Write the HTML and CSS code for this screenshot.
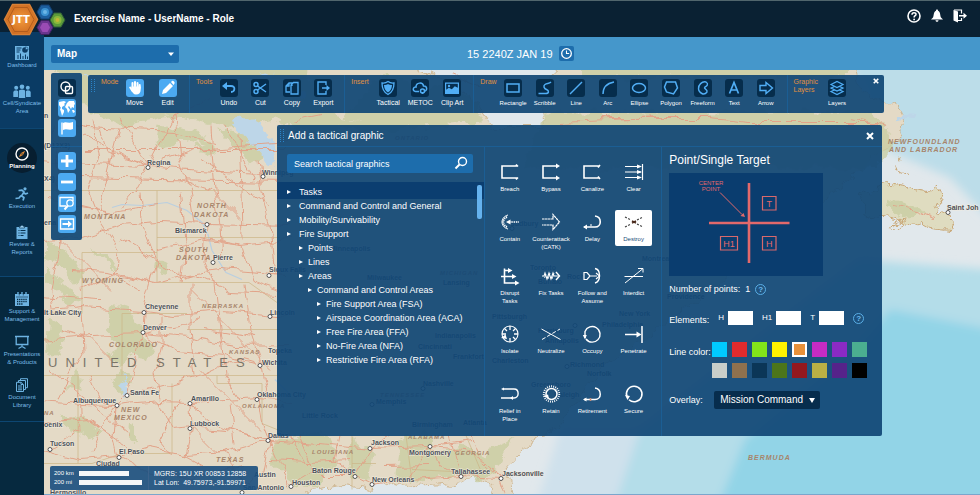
FILE: index.html
```html
<!DOCTYPE html>
<html lang="en">
<head>
<meta charset="utf-8">
<title>JTT - Planning</title>
<link rel="stylesheet" href="styles.css">
</head>
<body>
<header class="topbar">
  <svg class="logo" viewBox="0 0 66 38" role="img" aria-label="JTT">
    <defs>
      <radialGradient id="go"><stop offset="0" stop-color="#f39a3c"/><stop offset="1" stop-color="#cf6d22"/></radialGradient>
    </defs>
    <path d="M37 12l4-7h8l4 7-4 7h-8z" fill="#1d5f9e" stroke="#123f70"/><circle cx="45" cy="12" r="4" fill="#3c93d2"/><circle cx="45" cy="12" r="2" fill="#6bb5e6"/>
    <path d="M37 27.500l4-7h8l4 7-4 7h-8z" fill="#6a358e" stroke="#3d2263"/><path d="M40 27.500l2.500-4.500h5l2.500 4.500-2.500 4.500h-5z" fill="#9a4bb4"/>
    <path d="M50 20l4-7h7l4 7-4 7h-7z" fill="#5c9a3a" stroke="#2f5e38"/><circle cx="57.500" cy="20" r="4" fill="#8cb83c"/><circle cx="57.500" cy="20" r="2" fill="#c3b537"/>
    <path d="M4.500 19.500L12.500 4.500h17l8 15-8 15h-17z" fill="url(#go)" stroke="#d98136" stroke-width="1.500"/>
    <path d="M8 19.500l6.500-12h13l6.500 12-6.500 12h-13z" fill="none" stroke="#a8551b" stroke-width=".8"/>
    <text x="21" y="23" class="logo-text">JTT</text>
  </svg>
  <h1>Exercise Name - UserName - Role</h1>
  <div class="top-actions">
    <button aria-label="Help"><svg viewBox="0 0 14 14"><circle cx="7" cy="7" r="6" fill="none" stroke="#fff" stroke-width="1.600"/><path d="M5 5.800C5 3 9.200 3.200 9 5.500C8.900 6.800 7.100 6.700 7.100 8.500" fill="none" stroke="#fff" stroke-width="1.500"/><circle cx="7.100" cy="10.400" r=".9" fill="#fff"/></svg></button>
    <button aria-label="Notifications"><svg viewBox="0 0 14 14"><path d="M7 .5c.8 0 1 .6 1 1.200C10.600 2.600 10 6.500 11 8.500l2 2H1l2-2C4 6.500 3.400 2.600 6 1.700C6 1.100 6.200.5 7 .5zM5.500 11.300h3C8.300 13.300 5.700 13.300 5.500 11.300z" fill="#fff"/></svg></button>
    <button aria-label="Log out"><svg viewBox="0 0 14 14"><path d="M.5 1l4.500 1.500v11L.5 11.500z" fill="#fff"/><path d="M1 1h7.500v3.500M8.500 9v2.500H5" fill="none" stroke="#fff" stroke-width="1.200"/><path d="M6 6h4.500V3.800L14 6.700l-3.500 3V7.500H6z" fill="#fff"/></svg></button>
  </div>
</header>

<div class="shell">
<nav class="sidebar" aria-label="Main">
  <div class="nav-group nav-group-top">
    <a href="#" class="nav-item"><svg viewBox="0 0 14 14"><path fill="#6db3e2" d="M0 0h14v14H0z"/><path d="M1.500 2h5M1.500 4h4M1.500 6h3M3 13V9M5.500 13V7.500M8 13v-3M10.500 13V8.500M12.500 13v-2.500" stroke="#0b3b64" stroke-width="1"/><circle cx="10" cy="4" r="2.800" fill="#0b3b64"/><path d="M10.500 3.500V.8a2.700 2.700 0 0 1 2.700 2.700z" fill="#6db3e2" stroke="#0b3b64" stroke-width=".5"/></svg>Dashboard</a>
    <a href="#" class="nav-item"><svg viewBox="0 0 18 14" fill="#6db3e2"><circle cx="9" cy="2.800" r="2.300"/><circle cx="3.200" cy="3.800" r="2"/><circle cx="14.800" cy="3.800" r="2"/><path d="M5.800 14V7.500Q6 5.600 9 5.600T12.200 7.500V14zM.3 13V8Q.5 6.300 3.200 6.300L5 7v6zM17.700 13V8Q17.500 6.300 14.800 6.300L13 7v6z"/></svg>Cell/Syndicate<br>Area</a>
  </div>
  <div class="nav-group nav-group-mid">
    <a href="#" class="nav-item active" aria-current="page"><svg viewBox="0 0 14 14"><circle cx="7" cy="7" r="6" fill="none" stroke="#fff" stroke-width="1.400"/><path d="M10.200 3.800L8 8 3.800 10.200 6 6z" fill="#e58a35"/><circle cx="7" cy="7" r=".7" fill="#07283f"/></svg>Planning</a>
    <a href="#" class="nav-item"><svg viewBox="0 0 14 14"><circle cx="10" cy="1.800" r="1.600" fill="#6db3e2"/><path d="M3.500 3.500L7 3.200 9 5l-2.500 4L9 10.500l-1 3M8.500 5.500L10.500 7l2.500-1M6 8.500L4 11 .5 11.500" fill="none" stroke="#6db3e2" stroke-width="1.700" stroke-linejoin="round"/></svg>Execution</a>
    <a href="#" class="nav-item"><svg viewBox="0 0 14 14"><path fill="#6db3e2" d="M1.500 2h11v12h-11z"/><path d="M4.500 3V1.200h1.300C6-.2 8-.2 8.200 1.200h1.300V3z" fill="#9fd0f0" stroke="#08304d" stroke-width=".6"/><path d="M3.500 5.500h1M5.500 5.500h5M3.500 8h1M5.500 8h5M3.500 10.500h1M5.500 10.500h3" stroke="#08304d"/></svg>Review &amp;<br>Reports</a>
  </div>
  <div class="nav-group nav-group-low">
    <a href="#" class="nav-item"><svg viewBox="0 0 14 14"><path fill="#6db3e2" d="M0 2h14v12H0z"/><path d="M1 5h12" stroke="#06293f" stroke-width=".6"/><path d="M2 7.500h10M2 9.700h10M2 12h6" stroke="#06293f" stroke-width="1.300" stroke-dasharray="1.300 .8"/><path d="M3 0v3M7 0v3M11 0v3" stroke="#6db3e2" stroke-width="1.400"/><path d="M4.300 1v2.500M8.300 1v2.500" stroke="#06293f" stroke-width=".6"/></svg>Support &amp;<br>Management</a>
    <a href="#" class="nav-item"><svg viewBox="0 0 14 14" fill="none" stroke="#6db3e2"><path d="M0 1.500h14M1.200 2v7.500h11.600V2" stroke-width="1.300"/><path d="M7 9.500V12M3.500 13.500L7 11.500l3.500 2" stroke-width="1.200"/></svg>Presentations<br>&amp; Products</a>
    <a href="#" class="nav-item"><svg viewBox="0 0 14 14" fill="#06293f" stroke="#6db3e2"><path d="M5.500.7h7v9h-7z"/><path d="M3.500 2.500h7v9h-7z"/><path d="M1.500 4.300h4.500l2.500 2.200v7h-7z"/><path d="M3 8h4M3 10h4M3 11.800h4M6 4.500v2h2"/></svg>Document<br>Library</a>
  </div>
</nav>

<main class="workspace">
  <div class="mapbar">
    <div class="select map-select"><select aria-label="View"><option>Map</option></select><svg viewBox="0 0 6 4"><path d="M0 0h6L3 3.500z" fill="#fff"/></svg></div>
    <div class="clock"><time>15 2240Z JAN 19</time><button aria-label="Set time"><svg viewBox="0 0 14 14"><circle cx="7" cy="7" r="4.500" fill="none" stroke="#fff" stroke-width="1.200"/><path d="M7 4.300V7h2.500" fill="none" stroke="#fff"/></svg></button></div>
  </div>

  <div class="map-area">
    <svg class="map" viewBox="44 70 936 425" preserveAspectRatio="xMidYMid slice" role="img" aria-label="Map of North America">
      <defs>
        <filter id="rough" x="-5%" y="-5%" width="110%" height="110%"><feTurbulence type="fractalNoise" baseFrequency=".09" numOctaves="4" seed="4"/><feDisplacementMap in="SourceGraphic" scale="14" xChannelSelector="R" yChannelSelector="G"/></filter>
        <filter id="wiggle" x="-2%" y="-2%" width="104%" height="104%"><feTurbulence type="fractalNoise" baseFrequency=".05" numOctaves="3" seed="8"/><feDisplacementMap in="SourceGraphic" scale="12" xChannelSelector="R" yChannelSelector="G"/></filter>
        <filter id="soft"><feGaussianBlur stdDeviation="5"/></filter>
      </defs>
      <path fill="#e1e8ec" d="M30 60h960v445H30z"/>
      <g filter="url(#soft)">
        <path fill="#bcdde9" d="M850 60h140v160L950 178 885 150 855 80z"/>
        <path fill="#cfe1ec" d="M560 430h130v80H535z"/>
        <path fill="#b4dde9" d="M640 430L860 260 990 270v250H610z"/>
        <path fill="#92d4e7" d="M745 440L860 345 890 310 990 330v185H715z"/>
      </g>
      <g filter="url(#rough)">
        <path fill="#e4dac6" stroke="#c9a878" stroke-width=".7" d="M20 50H385L470 95 492 128 545 128 537 90 582 50H850L862 92 905 112 900 138 880 152 850 180 700 300 600 370 560 425 520 452 506 468 518 510H500L492 485 475 478 455 486 440 484 405 487 380 480 372 490 345 486 310 490 294 510H20z"/>
        <path fill="#dfdcc0" stroke="#c9a878" stroke-width="1" d="M860 195l32-12 14 2 8 6 14 2 10-5 5 10-8 14 18 8-5 10-16-2-10-6-12 4-14-6-30-4z"/>
        <path fill="none" stroke="#c9a878" d="M890 226l18-8-7 10zM893 168l13 5M898 158l2 6"/>
      </g>
      <g filter="url(#rough)" fill="#c8cda0" opacity=".75">
        <path d="M50 62h270l-15 14 40 50-30 8-40-14-45 8-60-12-50 10-34-20z"/>
        <path d="M160 126l45 8 5 10-20-4-35 8zM196 145l15-3 8 10-14 5zM218 130l30 5 20 20-15 8-20-15z"/>
        <path d="M46 242l22 10 15 22-6 12-12-16-19-10zM46 268l16 14 20 16-10 8-26-22zM92 248l20 12 8 12-20-12zM155 260l14 4-3 12-12-7z"/>
        <path d="M108 305l22 4 10 22 14 20-6 10-14-8-12 14-14-6 8-20-10-10zM48 318l18 10-8 30-12-4zM66 390l10-24 6 24zM112 380l12-12 8 12-14 14z"/>
        <path d="M60 415l26 5 18 12-12 8-30-14zM128 425l7 0 0 20-8-8z"/>
        <path d="M545 112h300l35 4 15 30-20 22h-350zM580 62h265v16H580z"/>
        <path d="M275 440l52-8 10 32-20 24-24-4-22-20zM350 438l24 18-6 28-22-10zM396 440l30-8 10 20 26-6 22 10 30-20-18 34-16 12-18-10-26 8-40 2 4-26z"/>
        <path d="M382 76l90 20 10 26-60 6-80-8zM282 126l48-6 90 6-40 8zM885 200l24 6 20 8-28 4z"/>
      </g>
      <g fill="#bdd6e8" filter="url(#rough)">
        <path d="M240 115l16 6 12 16 8 24-6 8-10-18-18-14-10-16zM258 75l14-2-5 5zM80 74l14 2-4 4zM120 388l5-14 3 14-5 12zM902 114l14 2-20 6zM290 92l18 2-12 6z"/>
      </g>
      <g fill="none" stroke="#b9cfe0" stroke-width="1.200"><path d="M112 208l10-3 20 1 25-3 20 8 15 12 6 12 4 16 14 22 16 7M275 380l14 14"/></g>
      <g fill="none" stroke="#cbb587" stroke-width=".8" opacity=".9">
        <path d="M44 191h236M157 191v92M157 238h123M82 253h75M82 253v61H44M157 283h92l28 20M122 314h65M122 314v62M44 376h236M217 376v8h45v40l20 8M172 384v70h-50l-30 10H44M78 376v88M187 330h93M352 436v54M406 436l6 46M376 464h-24M466 436l16 38M412 470l60 3"/>
      </g>
      <g fill="none" stroke="#e2a389" stroke-width="1" filter="url(#wiggle)">
        <path d="M40 160L90 165 148 167 200 172 285 176M148 167L120 118M148 167L175 116 210 100M148 167L135 191 120 208M148 167L195 150 290 143M82 135L110 150 148 167M90 120L98 160 88 190 100 220M175 116L180 160 190 191 195 225M210 128L215 191 220 225 222 262M240 135L242 191 243 240M258 160L262 191 270 225 275 275M82 150H290M82 178L160 180 290 182"/>
        <path d="M40 240L82 238 120 225 160 222 207 224 290 226M82 205L110 212 160 205M100 220L120 250 115 275 140 290M62 240L52 290 56 315M120 240L157 262 180 275 220 270 285 275M140 191L142 222 157 262 150 290 144 312M157 250L200 240 240 245 290 240M82 290L115 275 157 283M180 191L185 240 180 283M207 224L205 262 215 285"/>
        <path d="M40 312L82 308 144 312 175 316 220 312 290 318M144 312L143 334 135 360 127 395M40 340L90 336 143 334 190 338 235 346 290 345M143 334L180 328 200 318M143 334L175 352 225 356 260 366M190 283V330L195 376M215 285L220 330 225 376 240 400M245 283L250 330 262 366 268 400M40 296L100 300M82 308L84 350 70 376 58 400M162 316V345L155 376 160 400"/>
        <path d="M40 402L80 405 117 406 160 402 190 403 258 399 290 402M127 395L117 406 115 440 119 457M117 406L100 430 90 455M127 395L165 385 200 376 230 362 258 366M190 403L191 428 185 455 205 466M190 403L220 428 268 440M160 402L172 430 191 428 235 432 268 440M258 399L262 425 268 440M119 457L150 448 185 455 225 452 268 440M40 450L80 460 119 457M78 390L80 432 50 450M40 424L90 420 115 440M119 457L165 480 205 475 245 470M268 440L262 470 245 490M268 440L290 490M225 452L235 475 255 488M191 428L215 452 225 452"/>
        <path d="M268 440L320 444 370 449 430 447 470 440M300 436L315 470 290 485M355 476L370 449 390 436M355 476L372 485 410 480 461 477 501 479M430 447L440 465 461 477M430 447L415 470 410 480M430 447L465 450 490 465 501 479M340 436L335 460 355 476M268 460L310 462 350 460M470 436L480 460 501 479 508 500M290 436L300 455 320 476 355 476M385 466L430 465M450 436L455 455 461 477"/>
        <path d="M292 122L320 116M60 118l25 10 90 4 40 12M100 128l8 25 35 10M180 180l30 10 30 30M70 270l40 2 47 12 35-10 40 18 45 2M200 238l42 7 10 36 30 10M60 330l30 10 25 25M90 376l10 25 17 5M205 330l50 8M180 400l-20 40 12 15M230 405l5 40M45 200l60 10M52 125l8 80M120 130l-20 80M225 125l30 55M200 160l70 45M55 235l55 55M190 290l80 80M200 370l60 60M50 370l80 65M140 455l-60-40M450 75l30 12M600 119h110l40 4h130M850 118l40 8M890 205l25 5 20 8M560 122l100-4"/>
      </g>
      <g class="state">
        <text x="84" y="219" class="wide">MONTANA</text><text x="197" y="208">NORTH</text><text x="194" y="217">DAKOTA</text><text x="179" y="252">SOUTH</text><text x="176" y="260">DAKOTA</text><text x="82" y="283">WYOMING</text><text x="202" y="308" class="sm">NEBRASKA</text><text x="109" y="347">COLORADO</text><text x="229" y="354" class="sm">KANSAS</text><text x="121" y="412">NEW</text><text x="114" y="420">MEXICO</text><text x="242" y="408" class="sm">OKLAHOMA</text><text x="216" y="462">TEXAS</text><text x="44" y="415" class="sm">NA</text><text x="312" y="454" class="sm">LOUISIANA</text><text x="455" y="455" class="sm">GEORGIA</text><text x="408" y="439" class="sm">ALABAMA</text><text x="888" y="144">NEWFOUNDLAND</text><text x="889" y="152">AND LABRADOR</text><text x="748" y="460">BERMUDA</text><text x="395" y="140" class="sm">ONTARIO</text><text x="380" y="397" class="sm">TENNESSEE</text><text x="440" y="275" class="sm">MICHIGAN</text>
      </g>
      <text class="country" x="48" y="367">UNITED STATES</text>
      <g class="city">
        <text x="147" y="165">Regina</text><text x="262" y="175">Winnipeg</text><text x="175" y="233">Bismarck</text><text x="213" y="260">Pierre</text><text x="145" y="309">Cheyenne</text><text x="44" y="315">lt Lake City</text><text x="143" y="330">Denver</text><text x="268" y="353">Topeka</text><text x="262" y="365">Wichita</text><text x="130" y="395">Santa Fe</text><text x="73" y="403">Albuquerque</text><text x="191" y="401">Amarillo</text><text x="257" y="397">Oklahoma City</text><text x="190" y="426">Lubbock</text><text x="50" y="446">Tucson</text><text x="119" y="454">El Paso</text><text x="96" y="466">Ciudad</text><text x="50" y="495">Hermosillo</text><text x="44" y="427">oenix</text><text x="254" y="477">Austin</text><text x="243" y="490">San Antonio</text><text x="292" y="485">Houston</text><text x="268" y="438">Dallas</text><text x="371" y="445">Jackson</text><text x="312" y="473">Baton Rouge</text><text x="372" y="482">New Orleans</text><text x="409" y="455">Montgomery</text><text x="451" y="474">Tallahassee</text><text x="502" y="476">Jacksonville</text><text x="947" y="210">Saint Joh</text><text x="269" y="272">Sioux Falls</text><text x="270" y="315">Lincoln</text><text x="44" y="118">n</text><text x="44" y="181">X4)</text><text x="44" y="225">ena</text><text x="44" y="148">(D12X3)</text>
        <text x="330" y="251">Minneapolis</text><text x="367" y="280">Milwaukee</text><text x="443" y="285">Lansing</text><text x="435" y="338">Indianapolis</text><text x="418" y="349">Cincinnati</text><text x="453" y="359">Frankfort</text><text x="510" y="226">Sudbury</text><text x="530" y="270">Toronto</text><text x="538" y="284">Buffalo</text><text x="567" y="279">Rochester</text><text x="642" y="261">Montreal</text><text x="492" y="319">Pittsburgh</text><text x="619" y="316">New York</text><text x="602" y="327">Philadelphia</text><text x="538" y="333">Harrisburg</text><text x="545" y="343">Annapolis</text><text x="570" y="367">Richmond</text><text x="587" y="376">Norfolk</text><text x="531" y="387">Greensboro</text><text x="554" y="397">Raleigh</text><text x="492" y="363">Charleston</text><text x="423" y="386">Nashville</text><text x="376" y="404">Memphis</text><text x="302" y="418">Little Rock</text><text x="412" y="427">Birmingham</text><text x="463" y="425">Atlanta</text><text x="667" y="299">Providence</text>
      </g>
      <g class="dots"><circle cx="148" cy="168" r="2"/><circle cx="263" cy="177" r="2"/><circle cx="207" cy="225" r="2"/><circle cx="213" cy="263" r="2"/><circle cx="269" cy="276" r="2"/><circle cx="144" cy="313" r="2"/><circle cx="270" cy="317" r="2"/><circle cx="143" cy="333" r="2"/><circle cx="260" cy="366" r="2"/><circle cx="127" cy="396" r="2"/><circle cx="117" cy="406" r="2"/><circle cx="190" cy="404" r="2"/><circle cx="257" cy="400" r="2"/><circle cx="190" cy="429" r="2"/><circle cx="50" cy="450" r="2"/><circle cx="119" cy="458" r="2"/><circle cx="268" cy="441" r="2"/><circle cx="370" cy="449" r="2"/><circle cx="430" cy="447" r="2"/><circle cx="355" cy="477" r="2"/><circle cx="372" cy="485" r="2"/><circle cx="291" cy="487" r="2"/><circle cx="461" cy="477" r="2"/><circle cx="501" cy="479" r="2"/><circle cx="242" cy="493" r="2"/><circle cx="948" cy="213" r="2"/><circle cx="423" cy="389" r="2"/><circle cx="372" cy="405" r="2"/><circle cx="575" cy="326" r="2"/><circle cx="567" cy="367" r="2"/><circle cx="512" cy="229" r="2"/></g>
    </svg>

    <div class="palette panel" role="toolbar" aria-label="Map controls">
      <div class="palette-group">
        <button class="tile dark" aria-label="Drawing tools"><svg viewBox="0 0 18 18" fill="none" stroke="#fff" stroke-width="1.400"><circle cx="7.500" cy="7.500" r="4.500"/><rect x="7.500" y="7.500" width="7" height="7" rx="1"/></svg></button>
        <button class="tile light" aria-label="Base map"><svg viewBox="0 0 18 18" fill="#fff"><path d="M1 3l5-1 2 1-2 2 1 1-3 2 0 2 2 1 0 2-2 4-1-4-1-3 1-1-2-3zM9 4l2-2 5 0 1 3-1 1 0 3-2-1-1 2-2-3-1 1 2 3-2 3-1-4-2-2 1-2zM14 11l2 0 1 2-2 1z"/></svg></button>
        <button class="tile light" aria-label="Markers"><svg viewBox="0 0 18 18"><path d="M4 3.500v12" stroke="#fff" stroke-width="1.400"/><path d="M5 4c3-2 5 1 10-1v7c-4 2-6-1-10 1z" fill="#fff"/></svg></button>
      </div>
      <div class="palette-group zoom-group">
        <button class="tile light" aria-label="Zoom in"><svg viewBox="0 0 18 18"><path d="M9 3v12M3 9h12" stroke="#fff" stroke-width="2.800"/></svg></button>
        <button class="tile light" aria-label="Zoom out"><svg viewBox="0 0 18 18"><path d="M3 9h12" stroke="#fff" stroke-width="2.800"/></svg></button>
        <button class="tile light" aria-label="Zoom to area"><svg viewBox="0 0 18 18" fill="none" stroke="#fff" stroke-width="1.300"><path d="M8 12H2V3.500h13V7"/><circle cx="12" cy="9" r="3.200"/><path d="M10 11.500L6.500 15.500" stroke-width="2"/></svg></button>
        <button class="tile light" aria-label="Go to extent"><svg viewBox="0 0 18 18"><path d="M2.500 4h13v10h-13z" fill="none" stroke="#fff" stroke-width="1.400"/><path d="M4.500 8H10V5.500L14 9l-4 3.500V10H4.500z" fill="#fff"/></svg></button>
      </div>
    </div>

    <div class="toolbar panel" role="toolbar" aria-label="Editing tools">
      <div class="tool-group mode"><i class="grip"></i><span class="group-label">Mode</span><div class="tools">
        <button><span class="tile light"><svg viewBox="0 0 18 18"><path d="M6.500 8V4M9 7.500V3M11.500 8V4M13.700 9V6M4.200 8.500L6.500 12" stroke="#fff" stroke-width="2" stroke-linecap="round"/><path d="M5.500 7.500h9.200v3c0 3-1.500 5-4.700 5-2.500 0-3.500-2-4.500-4z" fill="#fff"/></svg></span>Move</button>
        <button><span class="tile light"><svg viewBox="0 0 18 18" fill="#fff"><path d="M3 15l1-4 7-7 3 3-7 7zM12 3l1-1q1-.5 2 .5t.5 2L14.500 6z"/></svg></span>Edit</button>
      </div></div>
      <div class="tool-group"><span class="group-label">Tools</span><div class="tools">
        <button><span class="tile dark"><svg viewBox="0 0 18 18"><path d="M5 7h6c5 0 4 6 0 6" fill="none" stroke="#51aef5" stroke-width="1.800"/><path d="M2 7l5-4v8z" fill="#51aef5"/></svg></span>Undo</button>
        <button><span class="tile dark"><svg viewBox="0 0 18 18" fill="none" stroke="#51aef5" stroke-width="1.500"><circle cx="5" cy="5.500" r="2"/><circle cx="5" cy="12.500" r="2"/><path d="M6.500 7L15 13M6.500 11L15 5"/></svg></span>Cut</button>
        <button><span class="tile dark"><svg viewBox="0 0 18 18" fill="none" stroke="#51aef5" stroke-width="1.300"><path d="M7 13H3V7l3-3h3v3M6 4v3H3M8 15V6l2.500-2.500H15V15z"/></svg></span>Copy</button>
        <button><span class="tile dark"><svg viewBox="0 0 18 18" fill="none" stroke="#51aef5" stroke-width="1.400"><path d="M12 6V3H4v12h8v-3M8 9h6"/><path d="M12.500 6l3.500 3-3.500 3z" fill="#51aef5" stroke="none"/></svg></span>Export</button>
      </div></div>
      <div class="tool-group insert"><span class="group-label">Insert</span><div class="tools">
        <button><span class="tile dark"><svg viewBox="0 0 18 18"><path d="M9 2.500c2 1.500 4 1.800 6 1.500 0 5-1 9-6 11.500C4 13 3 9 3 4c2 .3 4 0 6-1.500z" fill="none" stroke="#51aef5" stroke-width="1.300"/><path d="M9 5c1 .7 2.500 1 4 1-.2 3-1 5.500-4 7.500-3-2-3.800-4.500-4-7.500 1.500 0 3-.3 4-1z" fill="#51aef5"/></svg></span>Tactical</button>
        <button><span class="tile dark"><svg viewBox="0 0 18 18" fill="none" stroke="#51aef5" stroke-width="1.500"><path d="M8 12.500H4.500c-3.500-.5-2.500-5 .5-4.500 0-5 7-5 7.500-1 4-.5 4 5 1 5"/><circle cx="11.500" cy="12" r="2"/><path d="M11.500 13v2"/></svg></span>METOC</button>
        <button><span class="tile dark"><svg viewBox="0 0 18 18"><rect x="2" y="3.500" width="14" height="11.500" fill="#51aef5"/><path d="M3.200 4.700h11.600v4l-3-1.500-3 3-3-1.500-2.600 2z" fill="#062f50"/><circle cx="6" cy="7" r="1.200" fill="#51aef5"/></svg></span>Clip Art</button>
      </div></div>
      <div class="tool-group draw"><span class="group-label">Draw</span><div class="tools narrow">
        <button><span class="tile dark"><svg viewBox="0 0 18 18" fill="none" stroke="#51aef5" stroke-width="1.500"><path d="M3 5h12v8H3z"/></svg></span>Rectangle</button>
        <button><span class="tile dark"><svg viewBox="0 0 18 18" fill="none" stroke="#51aef5" stroke-width="1.500"><path d="M2.500 14.500h7c4 0 3.500-3 1-4S7 7 9 5.500s4-.5 6-2.500"/></svg></span>Scribble</button>
        <button><span class="tile dark"><svg viewBox="0 0 18 18" fill="none" stroke="#51aef5" stroke-width="1.500"><path d="M3 15L15 3"/></svg></span>Line</button>
        <button><span class="tile dark"><svg viewBox="0 0 18 18" fill="none" stroke="#51aef5" stroke-width="1.500"><path d="M4 15Q4 5 15 3"/></svg></span>Arc</button>
        <button><span class="tile dark"><svg viewBox="0 0 18 18" fill="none" stroke="#51aef5" stroke-width="1.500"><ellipse cx="9" cy="9" rx="6.500" ry="4.500"/></svg></span>Ellipse</button>
        <button><span class="tile dark"><svg viewBox="0 0 18 18" fill="none" stroke="#51aef5" stroke-width="1.500"><path d="M4.500 3h9L15.500 9 11.500 15 4.500 13 2.500 8z"/></svg></span>Polygon</button>
        <button><span class="tile dark"><svg viewBox="0 0 18 18" fill="none" stroke="#51aef5" stroke-width="1.400"><path d="M12 3c3 2 1 4-1 5-2 2 3 2 2 5-3 4-8 1-8.500-3S8 2 12 3z"/></svg></span>Freeform</button>
        <button><span class="tile dark"><svg viewBox="0 0 18 18" fill="none" stroke="#51aef5" stroke-width="1.700"><path d="M4.500 14.500L9 3.500l4.500 11M6 11h6"/></svg></span>Text</button>
        <button><span class="tile dark"><svg viewBox="0 0 18 18" fill="none" stroke="#51aef5" stroke-width="1.400"><path d="M3 6.500h6V3.500L15.500 9 9 14.500V11.500H3z"/></svg></span>Arrow</button>
      </div></div>
      <div class="tool-group layers"><span class="group-label">Graphic Layers</span><div class="tools narrow">
        <button><span class="tile dark"><svg viewBox="0 0 18 18" fill="#062f50" stroke="#51aef5" stroke-width="1.200"><path d="M3 12.500L9 10l6 2.500L9 15.500z"/><path d="M3 9L9 6.500 15 9 9 12z"/><path d="M3 5.500L9 2.500l6 3-6 3z"/></svg></span>Layers</button>
      </div><button class="close small" aria-label="Close toolbar"><svg viewBox="0 0 8 8"><path d="M1 1l6 6M7 1L1 7" stroke="#fff" stroke-width="2.200"/></svg></button></div>
    </div>

    <section class="dialog panel" aria-labelledby="dlg-title">
      <header class="dialog-head"><i class="grip"></i><h2 id="dlg-title">Add a tactical graphic</h2><button class="close" aria-label="Close"><svg viewBox="0 0 8 8"><path d="M1 1l6 6M7 1L1 7" stroke="#fff" stroke-width="2"/></svg></button></header>
      <div class="dialog-body">
        <div class="browse">
          <div class="search"><input type="search" placeholder="Search tactical graphics" aria-label="Search tactical graphics"><svg viewBox="0 0 14 14" fill="none" stroke="#fff"><circle cx="8.500" cy="5.500" r="4" stroke-width="1.400"/><path d="M5.500 8.500L1.500 12.500" stroke-width="2"/></svg></div>
          <div class="tree-wrap">
          <ul class="tree">
            <li class="selected"><span>Tasks</span></li>
            <li><span>Command and Control and General</span></li>
            <li><span>Mobility/Survivability</span></li>
            <li><span>Fire Support</span>
              <ul class="level-2">
                <li><span>Points</span></li>
                <li><span>Lines</span></li>
                <li><span>Areas</span>
                  <ul><li><span>Command and Control Areas</span>
                    <ul>
                      <li><span>Fire Support Area (FSA)</span></li>
                      <li><span>Airspace Coordination Area (ACA)</span></li>
                      <li><span>Free Fire Area (FFA)</span></li>
                      <li><span>No-Fire Area (NFA)</span></li>
                      <li><span>Restrictive Fire Area (RFA)</span></li>
                    </ul></li></ul></li>
              </ul></li>
          </ul>
          <i class="scroll-thumb"></i>
          </div>
        </div>

        <div class="graphics">
          <button><svg viewBox="0 0 20 20"><path d="M17.500 4H2v12h15.500M16 2.500l2 2M16 17.500l2-2"/></svg>Breach</button>
          <button><svg viewBox="0 0 20 20"><path d="M16 4H2v12h14"/><path class="f" d="M15 1.500L19 4l-4 2.500zM15 13.500l4 2.500-4 2.500z"/></svg>Bypass</button>
          <button><svg viewBox="0 0 20 20"><path d="M17 4H2v12h15M16 5.500l2-2.500M16 14.500l2 2.500"/></svg>Canalize</button>
          <button><svg viewBox="0 0 20 20"><path d="M18.500 2v16M1 4.500h16M1 10h16M1 15.500h16" stroke-width="1.200"/><path class="f" d="M13 2.500l5 2-5 2zM13 8l5 2-5 2zM13 13.500l5 2-5 2z"/></svg>Clear</button>
          <button><svg viewBox="0 0 20 20"><path d="M8 3C0 5 0 15 8 17" stroke-width="1"/><path d="M7 5C2 7 2 13 7 15" stroke-width="2" stroke-dasharray="1.200 .8"/><path d="M9 10h10" stroke-width="1.500" stroke-dasharray="1.500 .8"/><path class="f" d="M6 10l4.500-2.500v5z"/></svg>Contain</button>
          <button><svg viewBox="0 0 20 20" stroke-dasharray="2.500 .4"><path d="M1 7h11V2.500l6.500 7.500-6.500 7.500V13H1" stroke-width="1.200"/></svg>Counterattack<br>(CATK)</button>
          <button><svg viewBox="0 0 20 20"><path d="M13 4c7 1 7 11 0 11H2"/><path class="f" d="M1 15l4-2.500v5z"/><path d="M9 14v-2" stroke-width="1"/></svg>Delay</button>
          <button class="chosen" aria-pressed="true"><svg viewBox="0 0 20 20"><path d="M1 5l6 3M13 8l6-3M1 15l6-3M13 12l6 3" stroke-dasharray="2 1.500" stroke-width="1.200"/><path d="M8 9l4 2M8 11l4-2" stroke="#4b2a1c" stroke-width="1.600"/></svg>Destroy</button>
          <button><svg viewBox="0 0 20 20"><path d="M4.500 2.500V17H16M4.500 4.500h5M1 10.500h12"/><path class="f" d="M8 2l4.500 2.500L8 7zM12 8l4.500 2.500L12 13zM15 14.500l4.500 2.500-4.500 2.500z"/></svg>Disrupt<br>Tasks</button>
          <button><svg viewBox="0 0 20 20"><path d="M1 10h2l1-3 2 6 2-6 2 6 2-6 1 3h5" stroke-width="1.100"/><path d="M3.500 12l1.500-4M7 13l2-6M11 13l2-6" stroke-width=".8"/><path d="M15 6l3.500 4-3.500 4" stroke-width="1.400"/></svg>Fix Tasks</button>
          <button><svg viewBox="0 0 20 20"><path d="M2 6.500h3L8 10l-3 3.500H2zM8 10h7" stroke-width="1.200"/><path d="M13 2.500c6 1 6 13 0 14.500" stroke-width="1.400"/><path d="M14 7l3.500 3L14 13" stroke-width="1.200"/></svg>Follow and<br>Assume</button>
          <button><svg viewBox="0 0 20 20"><path d="M.5 10.500H19M1 17L18.500 3M14 2.500h5v4" stroke-width="1"/></svg>Interdict</button>
          <button><svg viewBox="0 0 20 20"><circle cx="10" cy="10" r="8" stroke-width="1.100"/><path d="M10 2v4M10 14v4M2 10h4M14 10h4M4.500 4.500l2.500 2.500M13 13l2.500 2.500M15.500 4.500L13 7" stroke-width="1.300"/><path class="f" d="M1 14l4.500-3.500L7 15z"/></svg>Isolate</button>
          <button><svg viewBox="0 0 20 20"><path d="M.5 5l19 10.500" stroke-width="1"/><path d="M1 15.500L19 5" stroke-dasharray="4 2" stroke-width="1"/></svg>Neutralize</button>
          <button><svg viewBox="0 0 20 20"><path d="M4 15A7.800 7.800 0 1 0 3 7.500V14" stroke-width="1.400"/><path class="f" d="M.8 11h4L3 15.500z"/></svg>Occupy</button>
          <button><svg viewBox="0 0 20 20"><path d="M1 10.500h13M18 2v17" stroke-width="1.500"/><path class="f" d="M12.500 7.500l5 3-5 3z"/></svg>Penetrate</button>
          <button><svg viewBox="0 0 20 20"><path d="M3 5h11c5.500 0 5.500 9 0 9H1" stroke-width="1.400"/><path class="f" d="M1 5l3-1.500v3zM13 12l-3 2 3 2z"/></svg>Relief in<br>Place</button>
          <button><svg viewBox="0 0 20 20"><circle cx="10.500" cy="10" r="5.500" stroke-width="1.500"/><circle cx="10.500" cy="10" r="7.700" stroke-width="2" stroke-dasharray=".9 1.200"/><path class="f" d="M2 12l5-1.500 1 4z"/></svg>Retain</button>
          <button><svg viewBox="0 0 20 20"><path d="M13 4c7 1 7 11.500 0 11.500H2" stroke-width="1.500"/><path class="f" d="M1 15.500l3.500-2v4z"/><path d="M8.500 14v3" stroke="#c58d77"/></svg>Retirement</button>
          <button><svg viewBox="0 0 20 20"><path d="M5 15.800A7.800 7.800 0 1 0 3 13" stroke-width="1.500"/><path class="f" d="M1 11l5 1-2.500 4z"/></svg>Secure</button>
        </div>

        <form class="details">
          <h3>Point/Single Target</h3>
          <svg class="preview" viewBox="0 0 154 103" role="img" aria-label="Point target diagram">
            <path d="M40 50h80.500M80 10v80" stroke="#e2696b" stroke-width="2.600"/>
            <path d="M51 19.500l22 22" stroke="#e2696b"/><path d="M76 44l-4.500-1 3-3z" fill="#e2696b"/>
            <g fill="none" stroke="#d8696c" stroke-width="1.200"><path d="M93.500 23.500h13.500v13.500H93.500zM93.500 63.500h13.500v13.500H93.500zM51.500 63.500h17v13.500h-17z"/></g>
            <g class="preview-text"><text x="42" y="12">CENTER</text><text x="42" y="18">POINT</text></g>
            <g class="preview-text big"><text x="100.300" y="33.500">T</text><text x="100.300" y="73.500">H</text><text x="60" y="73.500">H1</text></g>
          </svg>
          <p class="points">Number of points: <b>1</b> <button type="button" class="help" aria-label="About points">?</button></p>
          <div class="elements"><span>Elements:</span>
            <label for="el-h">H</label><input id="el-h" type="text">
            <label for="el-h1">H1</label><input id="el-h1" type="text">
            <label for="el-t">T</label><input id="el-t" type="text">
            <button type="button" class="help" aria-label="About elements">?</button></div>
          <div class="colors"><span id="lc">Line color:</span>
            <div class="swatches" role="radiogroup" aria-labelledby="lc">
              <input type="radio" name="c" class="cyan" aria-label="Cyan"><input type="radio" name="c" class="red" aria-label="Red"><input type="radio" name="c" class="lime" aria-label="Lime"><input type="radio" name="c" class="yellow" aria-label="Yellow"><input type="radio" name="c" class="orange" aria-label="Orange" checked><input type="radio" name="c" class="magenta" aria-label="Magenta"><input type="radio" name="c" class="violet" aria-label="Violet"><input type="radio" name="c" class="teal" aria-label="Teal">
              <input type="radio" name="c" class="gray" aria-label="Gray"><input type="radio" name="c" class="brown" aria-label="Brown"><input type="radio" name="c" class="navy" aria-label="Navy"><input type="radio" name="c" class="green" aria-label="Green"><input type="radio" name="c" class="maroon" aria-label="Maroon"><input type="radio" name="c" class="olive" aria-label="Olive"><input type="radio" name="c" class="purple" aria-label="Purple"><input type="radio" name="c" class="black" aria-label="Black">
            </div></div>
          <div class="overlay"><label for="overlay">Overlay:</label><div class="select"><select id="overlay"><option>Mission Command</option></select><svg viewBox="0 0 6 5"><path d="M0 0h6L3 5z" fill="#fff"/></svg></div></div>
        </form>
      </div>
    </section>

    <div class="status panel">
      <div class="scale"><span>200 km</span><i class="bar km"></i><span>200 mi</span><i class="bar mi"></i></div>
      <div class="coords"><div>MGRS: 15U XR 00853 12858</div><div>Lat Lon:&nbsp; 49.75973,-91.59971</div></div>
    </div>
  </div>
</main>
</div>
</body>
</html>
```
FILE: styles.css
```css
* { box-sizing: border-box; }
body {
  margin: 0;
  min-height: 100vh;
  display: flex;
  flex-direction: column;
  font: 9px/14px "Liberation Sans", sans-serif;
  color: #fff;
  background: #06293f;
}
button { font: inherit; color: inherit; background: none; border: 0; padding: 0; margin: 0; cursor: pointer; }
svg { display: block; }
h1, h2, h3, p, ul { margin: 0; padding: 0; }
input, select { font: inherit; color: inherit; margin: 0; border: 0; border-radius: 0; }
i { font-style: normal; }

.topbar {
  display: flex;
  align-items: center;
  height: 37px;
  background: #0a2133;
  border-top: 1px solid #51666d;
}
.logo { position: relative; z-index: 2; width: 66px; height: 38px; flex: none; }
.logo-text { font: bold 10px "DejaVu Sans", sans-serif; fill: #fff; text-anchor: middle; }
.topbar h1 { margin-left: 8px; font: bold 10px/14px "Liberation Sans", sans-serif; }
.top-actions { display: flex; gap: 9px; margin: 0 13px 6px auto; }
.top-actions svg { width: 14px; height: 14px; }

.shell { flex: 1; display: flex; }
.sidebar {
  position: relative;
  z-index: 1;
  flex: none;
  width: 44px;
  margin-top: -5px;
  background: #06293f;
}
.nav-group { border-bottom: 1px solid #0d4672; }
.nav-group-top { padding-top: 14px; min-height: 97px; background: #0a3b64; }
.nav-group-mid { min-height: 148px; background: #08304d; padding-top: 14px; }
.nav-group-low { min-height: 144px; padding-top: 15px; }
.nav-item {
  display: block;
  min-height: 38px;
  font: 6px/8px "Liberation Sans", sans-serif;
  text-align: center;
  white-space: nowrap;
  text-decoration: none;
  color: #7dbde8;
}
.nav-item svg { height: 14px; margin: 0 auto 1px; }
.nav-group-low .nav-item { min-height: 43px; }
.nav-item.active {
  width: 30px;
  height: 30px;
  min-height: 30px;
  margin: 0 auto 14px;
  padding-top: 4px;
  border-radius: 50%;
  background: #071e30;
  color: #fff;
  font: bold 6px/8px "Liberation Sans", sans-serif;
  display: flex;
  flex-direction: column;
  align-items: center;
}

.workspace { flex: 1; min-width: 0; display: flex; flex-direction: column; }
.mapbar { display: flex; align-items: center; height: 33px; padding-left: 7px; background: #4597cb; }
.select { position: relative; }
.select select {
  appearance: none;
  display: block;
  width: 100%;
  height: 18px;
  padding: 0 6px;
  border-radius: 2px;
  background: #1d6dac;
  font: 10px/18px "Liberation Sans", sans-serif;
}
.select svg { position: absolute; right: 5px; top: 7px; width: 6px; height: 5px; pointer-events: none; }
.map-select { width: 128px; }
.map-select select { font-weight: bold; }
.clock { display: flex; align-items: center; gap: 6px; margin-left: 31%; font: 11px/16px "Liberation Sans", sans-serif; }
.clock button { width: 15px; height: 15px; border-radius: 2px; background: #1d6dac; }

.map-area { position: relative; flex: 1; border-bottom: 1px solid #7ba6cc; }
.map { position: absolute; inset: 0; width: 100%; height: 100%; }
.map text { paint-order: stroke; }
.state { font: italic bold 7px "Liberation Sans", sans-serif; fill: #a7846a; letter-spacing: 1px; }
.state .sm { font-size: 6px; }
.country { font: 13px "Liberation Sans", sans-serif; fill: #7a7468; letter-spacing: 8px; }
.city { font: bold 7px "Liberation Sans", sans-serif; fill: #4c5058; stroke: #f1ecdf; stroke-width: 1px; }
.dots { fill: #fff; stroke: #555; stroke-width: 1px; }

.panel { position: absolute; background: rgba(17, 71, 117, .93); border-radius: 2px; }

.tile { display: block; width: 18px; height: 18px; border-radius: 3px; }
.tile.light { background: #4caaf2; }
.tile.dark { background: #062d4c; }

.palette { left: 7px; top: 3px; width: 31px; }
.palette-group { display: flex; flex-direction: column; align-items: center; gap: 2px; padding: 6px 0 9px; }
.zoom-group { gap: 3px; padding: 5px 0 7px; border-top: 1px solid #1b5e94; }

.toolbar {
  left: 44px;
  top: 5px;
  width: 85%;
  min-height: 38px;
  display: grid;
  grid-template-columns: 101fr 155fr 129fr 313fr 97fr;
  font: 7px/10px "Liberation Sans", sans-serif;
}
.tool-group { position: relative; display: flex; padding: 4px 5px 0 6px; border-left: 1px solid #1b5e94; }
.tool-group.mode { border-left: 0; padding-left: 3px; }
.grip {
  flex: none;
  width: 4px;
  height: 13px;
  margin-right: 6px;
  background:
    repeating-linear-gradient(#2b84c8 0 1px, transparent 1px 2px) 0 0 / 1px 100% no-repeat,
    repeating-linear-gradient(#2b84c8 0 1px, transparent 1px 2px) 3px 0 / 1px 100% no-repeat;
}
.group-label { flex: none; width: 17px; line-height: 8px; margin-top: -1px; color: #e0913f; white-space: nowrap; }
.insert .group-label { width: 21px; }
.layers .group-label { width: 27px; white-space: normal; }
.layers { padding-right: 30px; }
.tools { flex: 1; display: grid; grid-auto-flow: column; grid-auto-columns: minmax(0, 1fr); }
.tools button { display: flex; flex-direction: column; align-items: center; gap: 1px; white-space: nowrap; }
.tools.narrow { font-size: 6px; }
.close { width: 8px; height: 8px; }
.close.small { position: absolute; top: 3px; right: 5px; width: 6px; height: 6px; }

.dialog { left: 233px; top: 55px; width: calc(65% - 3px); }
.dialog-head { display: flex; align-items: center; height: 22px; padding: 0 8px 0 3px; border-bottom: 1px solid #1b5e94; }
.dialog-head .grip { margin-right: 4px; }
.dialog-head h2 { flex: 1; font: 10px/14px "Liberation Sans", sans-serif; }
.dialog-body { display: grid; grid-template-columns: 208fr 177fr 220fr; min-height: 289px; }
.browse, .graphics { border-right: 1px solid #1b5e94; }
.search { position: relative; margin: 7px 11px 9px 10px; }
.search input { display: block; width: 100%; height: 19px; padding: 0 7px; border-radius: 2px; background: #1d6dac; }
.search input::placeholder { color: #fff; opacity: 1; }
.search svg { position: absolute; right: 5px; top: 2px; width: 14px; height: 14px; }
.tree-wrap { position: relative; }
.tree, .tree ul { list-style: none; }
.tree > li { padding-left: 10px; }
.tree > .selected { padding-top: 3px; background: #0b3e70; }
.tree ul { padding-left: 9px; }
.tree .level-2 { padding-left: 12px; }
.tree span { display: flex; align-items: center; white-space: nowrap; }
.tree span::before { content: ""; margin-right: 5px; border: solid transparent; border-width: 2px 0 2px 4px; border-left-color: #fff; }
.tree > li > span::before { margin-right: 8px; }
.scroll-thumb { position: absolute; right: 2px; top: 3px; width: 5px; height: 34px; border-radius: 2px; background: #65b2ee; }

.graphics {
  display: grid;
  grid-template-columns: repeat(4, 1fr);
  grid-template-rows: 50px 54px 58px 60px auto;
  justify-items: center;
  align-items: start;
  padding: 13px 7px 0 4px;
  font: 6px/8px "Liberation Sans", sans-serif;
}
.graphics button { width: 37px; min-height: 36px; padding-top: 2px; border-radius: 2px; white-space: nowrap; display: flex; flex-direction: column; align-items: center; text-align: center; }
.graphics svg { width: 20px; height: 20px; margin-bottom: 3px; fill: none; stroke: currentColor; stroke-width: 1.6; }
.graphics svg .f { fill: currentColor; stroke: none; }
.graphics .chosen { background: #fff; color: #1a4c79; }
.graphics .chosen svg { color: #444; }

.details { padding: 5px 7px 0; }
.details h3 { font: 12px/16px "Liberation Sans", sans-serif; }
.preview { width: 154px; height: 103px; margin-top: 5px; background: #0a3d6f; }
.preview-text { font: 6px "Liberation Sans", sans-serif; fill: #e2696b; text-anchor: middle; }
.preview-text.big { font-size: 9px; }
.points { display: flex; align-items: center; margin-top: 6px; }
.points b { font-weight: normal; margin: 0 5px 0 5px; }
.help { width: 11px; height: 11px; border: 1px solid #5aaee6; border-radius: 50%; color: #6fbcf0; font: bold 8px/9px "Liberation Sans", sans-serif; }
.elements { display: flex; align-items: center; margin-top: 13px; }
.elements span { width: 49px; padding-top: 4px; }
.elements label { margin-right: 4px; font: 8px/14px "Liberation Sans", sans-serif; }
.elements input { width: 25px; height: 14px; margin-right: 9px; background: #fff; color: #123; }
.colors { display: flex; margin-top: 15px; }
.colors span { width: 43px; padding-top: 3px; white-space: nowrap; }
.swatches { display: grid; grid-template-columns: repeat(8, 15px); gap: 6px 5px; }
.swatches input { appearance: none; width: 15px; height: 15px; }
.swatches input:checked { border: 2px solid #fff; }
.cyan { background: #00caff; } .red { background: #e02b2e; } .lime { background: #82e51a; } .yellow { background: #fff200; }
.orange { background: #e8913a; } .magenta { background: #c62bc4; } .violet { background: #8b2ac5; } .teal { background: #4bae90; }
.gray { background: #c9cec9; } .brown { background: #8f714e; } .navy { background: #0b3657; } .green { background: #4c751b; }
.maroon { background: #93181e; } .olive { background: #bab045; } .purple { background: #56238a; } .black { background: #000; }
.overlay { display: flex; align-items: center; margin-top: 13px; }
.overlay label { width: 45px; }
.overlay .select { width: 106px; }
.overlay select { background: #072d4d; }

.status { left: 6px; bottom: 4px; width: 208px; min-height: 24px; display: flex; background: rgba(24, 78, 126, .9); font: 7px/9px "Liberation Sans", sans-serif; }
.scale { display: grid; grid-template-columns: 25px 1fr; align-items: center; width: 99px; padding: 3px 0 3px 4px; border-right: 1px solid #3b628b; font-size: 6px; }
.bar { height: 5px; background: #f4f6f8; }
.km { width: 50px; }
.mi { width: 63px; }
.coords { padding: 3px 0 3px 5px; white-space: nowrap; }
```
